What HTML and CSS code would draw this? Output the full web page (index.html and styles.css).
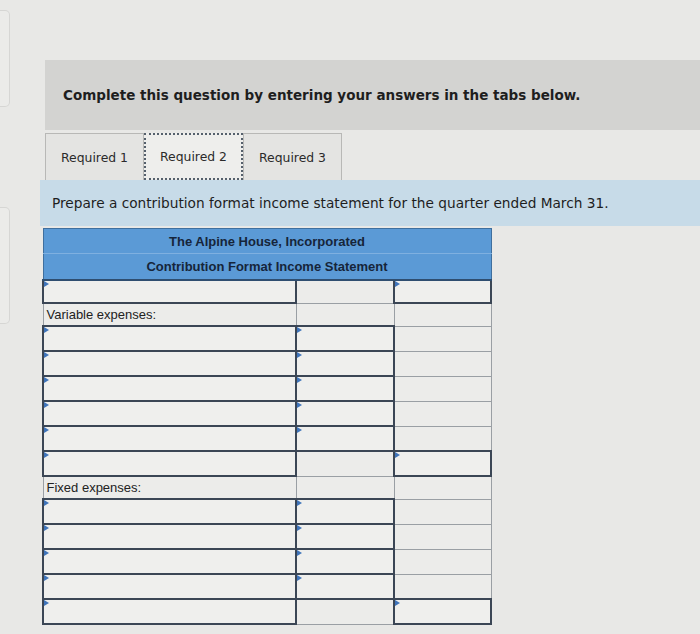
FILE: index.html
```html
<!DOCTYPE html>
<html>
<head>
<meta charset="utf-8">
<link rel="stylesheet" href="styles.css">
</head>
<body>
<div class="edge">
  <div class="edge-box top"></div>
  <div class="edge-box mid"></div>
</div>
<div class="page">
  <div class="banner">Complete this question by entering your answers in the tabs below.</div>
  <div class="tabs">
    <div class="tab">Required 1</div>
    <div class="tab active">Required 2</div>
    <div class="tab">Required 3</div>
  </div>
  <div class="band">Prepare a contribution format income statement for the quarter ended March 31.</div>
  <table class="stmt">
    <colgroup><col class="c1"><col class="c2"><col class="c3"></colgroup>
    <tr class="h1"><th colspan="3">The Alpine House, Incorporated</th></tr>
    <tr class="h2"><th colspan="3">Contribution Format Income Statement</th></tr>
    <tr class="short"><td class="in f"></td><td></td><td class="in f"></td></tr>
    <tr class="short"><td class="lbl">Variable expenses:</td><td></td><td></td></tr>
    <tr><td class="in f"></td><td class="in f"></td><td></td></tr>
    <tr><td class="in f"></td><td class="in f"></td><td></td></tr>
    <tr><td class="in f"></td><td class="in f"></td><td></td></tr>
    <tr><td class="in f"></td><td class="in f"></td><td></td></tr>
    <tr><td class="in f"></td><td class="in f"></td><td></td></tr>
    <tr><td class="in f"></td><td></td><td class="in f"></td></tr>
    <tr class="short"><td class="lbl">Fixed expenses:</td><td></td><td></td></tr>
    <tr><td class="in f"></td><td class="in f"></td><td></td></tr>
    <tr><td class="in f"></td><td class="in f"></td><td></td></tr>
    <tr><td class="in f"></td><td class="in f"></td><td></td></tr>
    <tr><td class="in f"></td><td class="in f"></td><td></td></tr>
    <tr><td class="in f"></td><td></td><td class="in f"></td></tr>
  </table>
</div>
</body>
</html>
```

FILE: styles.css
```css
html, body {
  margin: 0;
  padding: 0;
}
body {
  background: #e8e8e6;
  width: 700px;
  height: 634px;
  overflow: hidden;
  display: flex;
}
.edge {
  width: 10px;
  display: flex;
  flex-direction: column;
}
.edge-box {
  border: 1px solid #d6d6d4;
  border-left: none;
  border-radius: 0 5px 5px 0;
  background: #ebebe9;
}
.edge-box.top {
  margin-top: 10px;
  height: 95px;
}
.edge-box.mid {
  margin-top: 100px;
  height: 115px;
}
.page {
  flex: 1;
  padding-top: 60px;
  padding-left: 35px;
}
.banner {
  height: 70px;
  background: #d3d3d1;
  display: flex;
  align-items: center;
  padding-left: 18px;
  font-family: "DejaVu Sans", Verdana, sans-serif;
  font-weight: bold;
  font-size: 13.5px;
  color: #1e1e1e;
}
.tabs {
  display: flex;
  margin-top: 3px;
  height: 47px;
}
.tab {
  width: 99px;
  border: 1px solid #b8b8b6;
  border-bottom: none;
  background: #e4e4e2;
  display: flex;
  align-items: center;
  justify-content: center;
  font-family: "DejaVu Sans", Verdana, sans-serif;
  font-size: 12.4px;
  color: #2a2a2a;
  box-sizing: border-box;
}
.tab.active {
  background: #eeeeec;
  border: 2px dotted #55606c;
}
.band {
  margin-left: -5px;
  height: 46px;
  background: #c7dbe8;
  display: flex;
  align-items: center;
  padding-left: 12px;
  font-family: "DejaVu Sans", Verdana, sans-serif;
  font-size: 13.7px;
  color: #1e1e1e;
}
.stmt {
  margin-left: -3px;
  margin-top: 2px;
  width: 448px;
  border-collapse: collapse;
  font-family: "Liberation Sans", Arial, sans-serif;
  font-size: 13px;
  color: #222;
  table-layout: fixed;
}
.c1 { width: 253px; }
.c2 { width: 98px; }
.c3 { width: 97px; }
.stmt th {
  background: #5b9ad6;
  font-weight: bold;
  color: #16253a;
  text-align: center;
  border: 1px solid #3f6f9e;
  padding: 0;
}
.h1 th { height: 23px; border-bottom: 1px solid #7fb0e0; }
.h2 th { height: 25px; border-bottom: 2px solid #2f4e70; }
.stmt tr { height: 25px; }
.stmt tr.short { height: 23px; }
.stmt td {
  border: 1px solid #9a9fa4;
  background: #ececea;
  padding: 0;
  position: relative;
}
.stmt td.in {
  border: 2px solid #3b4655;
  background: #efefed;
}
.stmt td.lbl {
  padding-left: 3px;
  vertical-align: middle;
}
.stmt td.f::before {
  content: "";
  position: absolute;
  left: 0;
  top: 0;
  border-left: 5px solid #3f74ba;
  border-top: 3px solid transparent;
  border-bottom: 3px solid transparent;
}
```
